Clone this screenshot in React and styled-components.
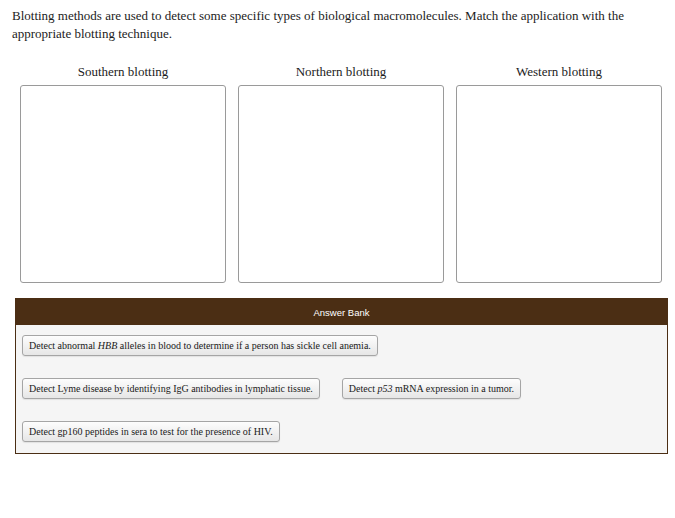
import React from 'react';
import { styled, createGlobalStyle } from 'styled-components';

const GlobalStyle = createGlobalStyle`
  html, body {
    margin: 0;
    padding: 0;
    background: #fff;
  }
  body {
    font-family: "Liberation Serif", "Times New Roman", serif;
    color: #1c1c1c;
  }
`;

const Page = styled.div`
  width: 675px;
  box-sizing: border-box;
  padding: 7px 8px 20px 12px;
`;

const Prompt = styled.p`
  margin: 0;
  font-size: 13px;
  line-height: 18px;
  max-width: 630px;
`;

const Columns = styled.div`
  display: grid;
  grid-template-columns: repeat(3, 206px);
  column-gap: 12px;
  margin: 20px 0 0 8px;
`;

const Column = styled.div`
  display: flex;
  flex-direction: column;
`;

const Heading = styled.div`
  font-size: 13px;
  line-height: 18px;
  text-align: center;
  margin-bottom: 4px;
`;

const DropBox = styled.div`
  height: 196px;
  border: 1px solid #9a9a9a;
  border-radius: 3px;
  background: #fff;
`;

const Bank = styled.div`
  margin: 15px 0 0 3px;
  width: 653px;
  box-sizing: border-box;
  border: 1px solid #4b2e14;
  background: #f5f5f5;
`;

const BankHeader = styled.div`
  height: 26px;
  background: #4b2e14;
  color: #fff;
  font-family: "Liberation Sans", Arial, sans-serif;
  font-size: 9.5px;
  display: flex;
  align-items: center;
  justify-content: center;
`;

const BankBody = styled.div`
  display: flex;
  flex-wrap: wrap;
  column-gap: 22px;
  row-gap: 22px;
  padding: 10px 6px 11px 6px;
`;

const Chip = styled.div`
  font-size: 10px;
  line-height: 13px;
  padding: 3px 6px;
  border: 1px solid #a5a5a5;
  border-radius: 3px;
  background: linear-gradient(#fdfdfd, #e6e6e6);
  box-shadow: 0 1px 1px rgba(0, 0, 0, 0.08);
  color: #1a1a1a;
  white-space: nowrap;
`;

const columns = ['Southern blotting', 'Northern blotting', 'Western blotting'];

export default function App() {
  return (
    <>
      <GlobalStyle />
      <Page>
        <Prompt>
          Blotting methods are used to detect some specific types of biological
          macromolecules. Match the application with the appropriate blotting
          technique.
        </Prompt>
        <Columns>
          {columns.map((name) => (
            <Column key={name}>
              <Heading>{name}</Heading>
              <DropBox />
            </Column>
          ))}
        </Columns>
        <Bank>
          <BankHeader>Answer Bank</BankHeader>
          <BankBody>
            <Chip>
              Detect abnormal <i>HBB</i> alleles in blood to determine if a person
              has sickle cell anemia.
            </Chip>
            <Chip>
              Detect Lyme disease by identifying IgG antibodies in lymphatic tissue.
            </Chip>
            <Chip>
              Detect <i>p53</i> mRNA expression in a tumor.
            </Chip>
            <Chip>Detect gp160 peptides in sera to test for the presence of HIV.</Chip>
          </BankBody>
        </Bank>
      </Page>
    </>
  );
}
